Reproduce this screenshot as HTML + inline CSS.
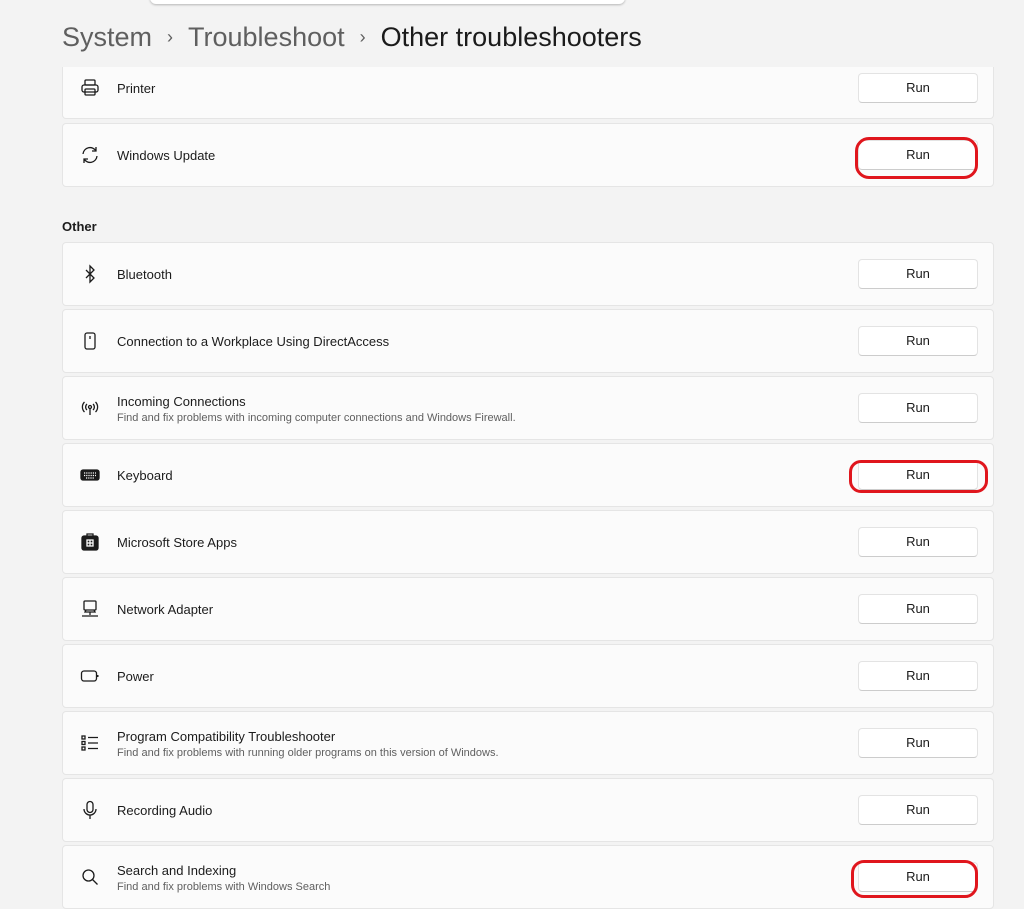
<!DOCTYPE html>
<html><head><meta charset="utf-8"><style>
body{margin:0;width:1024px;height:906px;background:#f3f3f3;font-family:"Liberation Sans",sans-serif;position:relative;overflow:hidden;color:#1b1b1b}
.top{position:absolute;left:150px;top:-6px;width:475px;height:10px;background:#fff;border-radius:0 0 6px 6px;box-shadow:0 1px 2px rgba(0,0,0,.25)}
.title{position:absolute;left:62px;top:22px;font-size:27px;color:#5f5f5f;white-space:nowrap}
.title b{font-weight:normal;color:#1b1b1b}
.title span{font-size:18px;margin:0 15px;position:relative;top:-3px}
.card{position:absolute;left:62px;width:930px;height:62px;background:#fbfbfb;border:1px solid #e5e5e5;border-radius:4px}
.card .ic{position:absolute;left:17px;top:21px;width:20px;height:20px}
.card .t{position:absolute;left:54px;top:24px;font-size:13px}
.card .t.two{top:17px}
.card .s{font-size:11px;color:#5f5f5f;margin-top:3px}
.btn{position:absolute;left:795px;top:16px;width:118px;height:28px;background:#fff;border:1px solid #e3e3e3;border-bottom-color:#ccc;border-radius:4px;font-size:13px;text-align:center;line-height:28px}
.hdr{position:absolute;left:62px;top:219px;font-size:13px;font-weight:bold;color:#1b1b1b}
.red{position:absolute;border:3px solid #e0161d}
svg{fill:none;stroke:#1b1b1b;stroke-width:1.3}
</style></head><body>
<div class="top"></div>
<div class="title">System<span>›</span>Troubleshoot<span>›</span><b>Other troubleshooters</b></div>

<div class="card" style="top:67px;height:51px;border-top:none;border-radius:0 0 4px 4px"><svg class="ic" style="top:11px" viewBox="0 0 20 20"><rect x="5" y="2" width="10" height="5" rx="1"/><rect x="2" y="7" width="16" height="7" rx="2"/><rect x="5" y="11" width="10" height="6" rx="1"/></svg><div class="t" style="top:14px">Printer</div><div class="btn" style="top:6px">Run</div></div>
<div class="card" style="top:123px"><svg class="ic" viewBox="0 0 20 20"><path d="M3 9a7 7 0 0 1 13-3M17 11a7 7 0 0 1-13 3M16 2v4h-4M4 18v-4h4"/></svg><div class="t">Windows Update</div><div class="btn">Run</div></div>

<div class="hdr">Other</div>

<div class="card" style="top:242px"><svg class="ic" viewBox="0 0 20 20"><path d="M6 6l8 8-4 4V2l4 4-8 8"/></svg><div class="t">Bluetooth</div><div class="btn">Run</div></div>
<div class="card" style="top:309px"><svg class="ic" viewBox="0 0 20 20"><rect x="5" y="2" width="10" height="16" rx="2"/><path d="M10 5v3"/></svg><div class="t">Connection to a Workplace Using DirectAccess</div><div class="btn">Run</div></div>
<div class="card" style="top:376px"><svg class="ic" viewBox="0 0 20 20"><circle cx="10" cy="9" r="1.5"/><path d="M10 10v7M7 6a4 4 0 0 0 0 6M13 6a4 4 0 0 1 0 6M4.5 4a7 7 0 0 0 0 10M15.5 4a7 7 0 0 1 0 10"/></svg><div class="t two">Incoming Connections<div class="s">Find and fix problems with incoming computer connections and Windows Firewall.</div></div><div class="btn">Run</div></div>
<div class="card" style="top:443px"><svg class="ic" viewBox="0 0 20 20"><rect x="1" y="5" width="18" height="10" rx="2" fill="#1b1b1b"/><path d="M4 8h12M4 10.5h12M6 13h8" stroke="#fff" stroke-dasharray="1.2 1"/></svg><div class="t">Keyboard</div><div class="btn">Run</div></div>
<div class="card" style="top:510px"><svg class="ic" viewBox="0 0 20 20"><path d="M7 4V2h6v2" /><rect x="2" y="4" width="16" height="14" rx="2" fill="#1b1b1b"/><path d="M7 8h6v6H7zM10 8v6M7 11h6" stroke="#fff"/></svg><div class="t">Microsoft Store Apps</div><div class="btn">Run</div></div>
<div class="card" style="top:577px"><svg class="ic" viewBox="0 0 20 20"><rect x="4" y="2" width="12" height="9" rx="1"/><path d="M6 11l-1 2h10l-1-2M10 13v3M2 17h16"/></svg><div class="t">Network Adapter</div><div class="btn">Run</div></div>
<div class="card" style="top:644px"><svg class="ic" viewBox="0 0 20 20"><rect x="1.5" y="5" width="15" height="10" rx="2.5"/><path d="M17.5 9v2" stroke-width="2"/></svg><div class="t">Power</div><div class="btn">Run</div></div>
<div class="card" style="top:711px"><svg class="ic" viewBox="0 0 20 20"><rect x="2" y="3" width="3" height="3"/><rect x="2" y="8.5" width="3" height="3"/><rect x="2" y="14" width="3" height="3"/><path d="M8 4.5h10M8 10h10M8 15.5h10"/></svg><div class="t two">Program Compatibility Troubleshooter<div class="s">Find and fix problems with running older programs on this version of Windows.</div></div><div class="btn">Run</div></div>
<div class="card" style="top:778px"><svg class="ic" viewBox="0 0 20 20"><rect x="7" y="1.5" width="6" height="11" rx="3"/><path d="M4 9a6 6 0 0 0 12 0M10 15v4"/></svg><div class="t">Recording Audio</div><div class="btn">Run</div></div>
<div class="card" style="top:845px"><svg class="ic" viewBox="0 0 20 20"><circle cx="8.5" cy="8.5" r="5.5"/><path d="M12.5 12.5l5 5"/></svg><div class="t two">Search and Indexing<div class="s">Find and fix problems with Windows Search</div></div><div class="btn">Run</div></div>

<div class="red" style="left:855px;top:137px;width:117px;height:36px;border-radius:14px"></div>
<div class="red" style="left:849px;top:460px;width:133px;height:27px;border-radius:12px"></div>
<div class="red" style="left:851px;top:860px;width:121px;height:32px;border-radius:13px"></div>
</body></html>
